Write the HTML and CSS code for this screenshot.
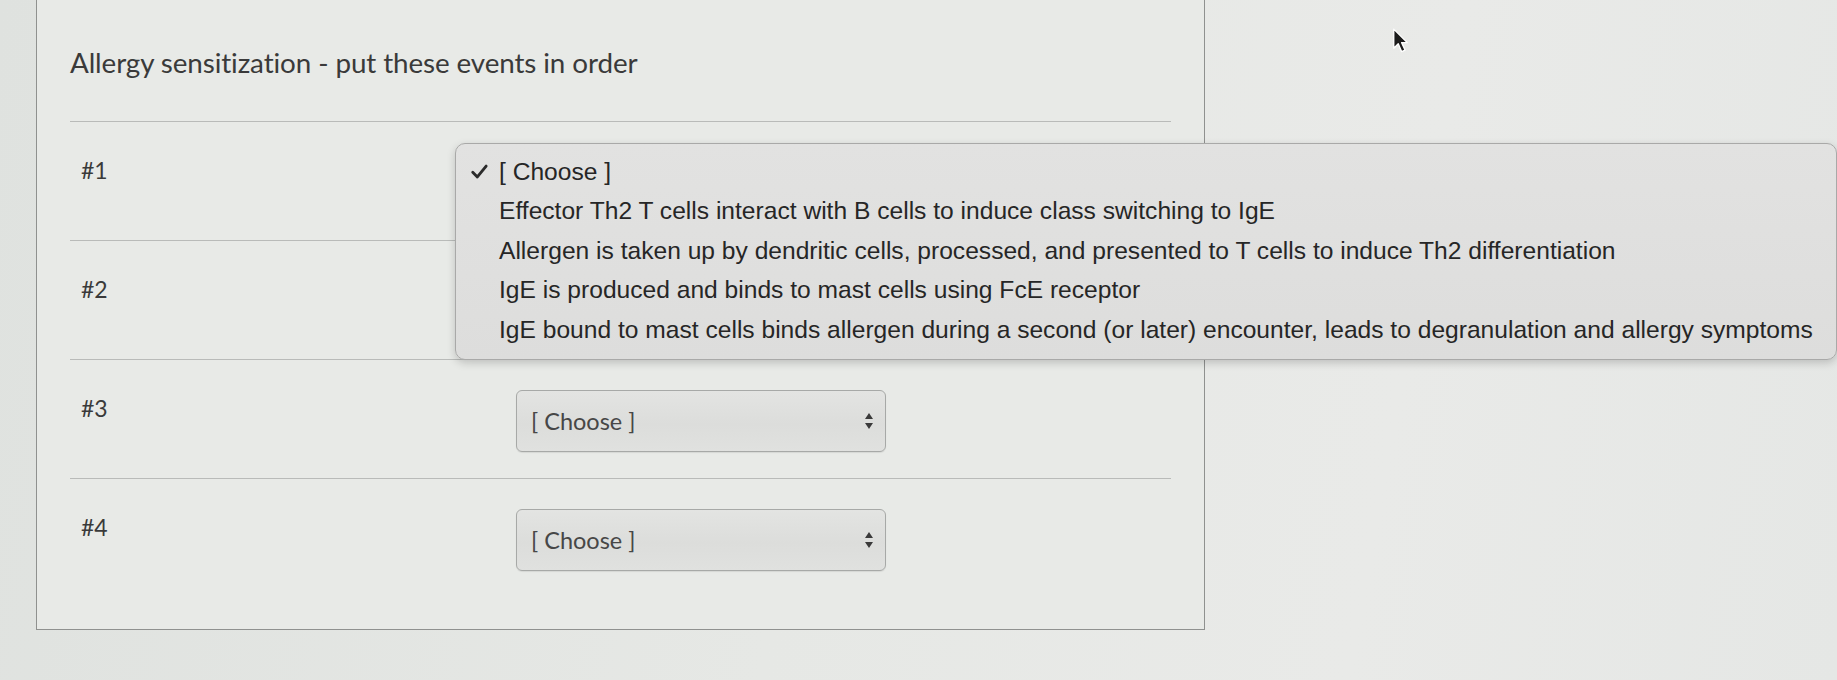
FILE: index.html
```html
<!DOCTYPE html>
<html>
<head>
<meta charset="utf-8">
<link rel="stylesheet" href="styles.css">
</head>
<body>
<div class="stage">
  <section class="card">
    <h1 class="title">Allergy sensitization - put these events in order</h1>
    <div class="rows">
      <div class="row">
        <div class="label">#1</div>
        <div class="select covered"><span>[ Choose ]</span><svg class="arrows" viewBox="0 0 10 20" width="10" height="20"><path d="M5 2 L9 8 L1 8 Z M5 18 L9 12 L1 12 Z" fill="#3a3a3a"/></svg></div>
      </div>
      <div class="row">
        <div class="label">#2</div>
        <div class="select covered"><span>[ Choose ]</span><svg class="arrows" viewBox="0 0 10 20" width="10" height="20"><path d="M5 2 L9 8 L1 8 Z M5 18 L9 12 L1 12 Z" fill="#3a3a3a"/></svg></div>
      </div>
      <div class="row">
        <div class="label">#3</div>
        <div class="select"><span>[ Choose ]</span><svg class="arrows" viewBox="0 0 10 20" width="10" height="20"><path d="M5 2 L9 8 L1 8 Z M5 18 L9 12 L1 12 Z" fill="#3a3a3a"/></svg></div>
      </div>
      <div class="row">
        <div class="label">#4</div>
        <div class="select"><span>[ Choose ]</span><svg class="arrows" viewBox="0 0 10 20" width="10" height="20"><path d="M5 2 L9 8 L1 8 Z M5 18 L9 12 L1 12 Z" fill="#3a3a3a"/></svg></div>
      </div>
    </div>
  </section>

  <ul class="menu">
    <li class="item selected"><svg class="check" viewBox="0 0 16 16" width="19" height="19"><path d="M2.3 8.6 L6.2 12.6 L13.6 3.4" fill="none" stroke="#2b2b2b" stroke-width="2.4" stroke-linecap="round" stroke-linejoin="round"/></svg><span>[ Choose ]</span></li>
    <li class="item"><span>Effector Th2 T cells interact with B cells to induce class switching to IgE</span></li>
    <li class="item"><span>Allergen is taken up by dendritic cells, processed, and presented to T cells to induce Th2 differentiation</span></li>
    <li class="item"><span>IgE is produced and binds to mast cells using FcE receptor</span></li>
    <li class="item"><span>IgE bound to mast cells binds allergen during a second (or later) encounter, leads to degranulation and allergy symptoms</span></li>
  </ul>

  <svg class="cursor" viewBox="0 0 14 24" width="17" height="27"><path d="M1 1 L1 18 L5 14 L8 21 L11 19.6 L8 13 L13 13 Z" fill="#1c1c1c" stroke="#ffffff" stroke-width="1.2" stroke-linejoin="round"/></svg>
</div>
</body>
</html>
```

FILE: styles.css
```css
html, body {
  margin: 0;
  padding: 0;
}
body {
  width: 1837px;
  height: 680px;
  overflow: hidden;
  background: linear-gradient(100deg, #dfe2df 0%, #e6e8e5 45%, #e9eae8 75%, #e5e7e5 100%);
  font-family: Lato, "Open Sans", sans-serif;
  color: #3b3b3b;
}
.stage {
  position: relative;
  width: 1837px;
  height: 680px;
}
.card {
  box-sizing: border-box;
  margin-left: 36px;
  width: 1169px;
  height: 630px;
  padding: 48px 33px 0 33px;
  border: 1px solid #8f918f;
  border-top: none;
  background: #e8eae7;
}
.title {
  margin: 0;
  font-weight: 400;
  font-size: 27.8px;
  line-height: 30px;
  color: #3a3a3a;
  letter-spacing: -0.1px;
}
.rows {
  margin-top: 43px;
}
.row {
  height: 118px;
  border-top: 1px solid #b9bbb9;
  display: grid;
  grid-template-columns: 446px 370px;
  align-items: start;
}
.label {
  padding: 35px 0 0 11px;
  font-size: 23px;
  line-height: 27px;
  color: #3a3a3a;
}
.select {
  margin-top: 30px;
  height: 60px;
  border: 1px solid #a7a9a7;
  border-radius: 6px;
  background: linear-gradient(180deg, #e3e4e2 0%, #dcdddb 55%, #e0e1df 100%);
  box-shadow: 0 1px 1px rgba(0,0,0,0.08);
  display: flex;
  align-items: center;
  justify-content: space-between;
  padding: 0 11px 0 14px;
  font-size: 23.5px;
  color: #474747;
}
.covered {
  visibility: hidden;
}
.arrows {
  display: block;
}
.menu {
  position: absolute;
  left: 455px;
  top: 143px;
  width: 1380px;
  height: 199px;
  margin: 0;
  padding: 8px 0;
  list-style: none;
  background: linear-gradient(180deg, #e2e2e1 0%, #dddddc 100%);
  border: 1px solid #a9a9a8;
  border-radius: 10px;
  box-shadow: 0 3px 8px rgba(0,0,0,0.18);
  font-family: "Liberation Sans", Arial, sans-serif;
  font-size: 24.6px;
  color: #262626;
}
.item {
  height: 39.5px;
  display: flex;
  align-items: center;
  padding-left: 43px;
  position: relative;
  white-space: nowrap;
}
.check {
  position: absolute;
  left: 14px;
  top: 10px;
}
.cursor {
  position: absolute;
  left: 1392px;
  top: 28px;
}
```
